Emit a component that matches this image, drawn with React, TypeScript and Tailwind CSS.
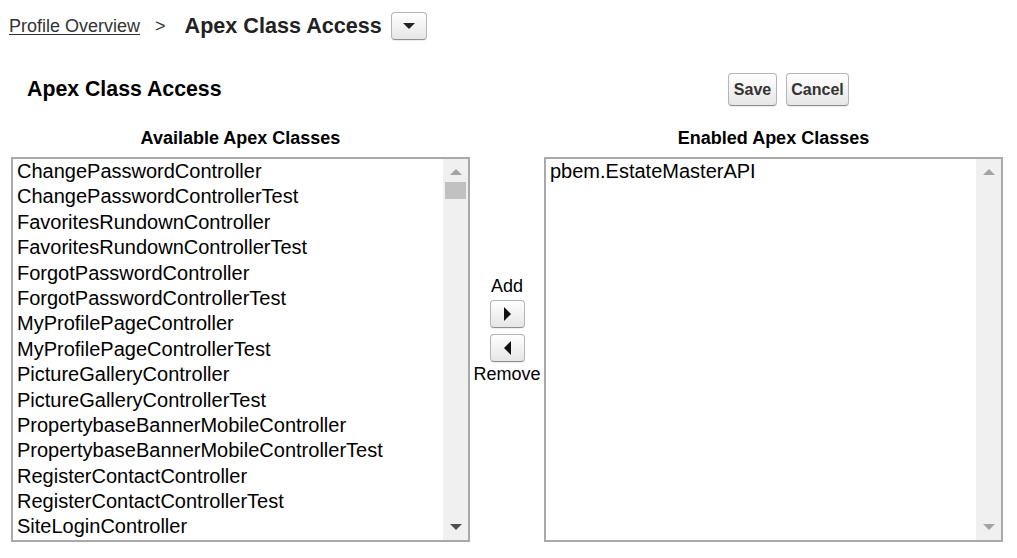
const available = [
  "ChangePasswordController",
  "ChangePasswordControllerTest",
  "FavoritesRundownController",
  "FavoritesRundownControllerTest",
  "ForgotPasswordController",
  "ForgotPasswordControllerTest",
  "MyProfilePageController",
  "MyProfilePageControllerTest",
  "PictureGalleryController",
  "PictureGalleryControllerTest",
  "PropertybaseBannerMobileController",
  "PropertybaseBannerMobileControllerTest",
  "RegisterContactController",
  "RegisterContactControllerTest",
  "SiteLoginController",
];

const enabled = ["pbem.EstateMasterAPI"];

function Tri({ dir, color }: { dir: "up" | "down" | "left" | "right"; color: string }) {
  const pts = {
    up: "0,6 6,0 12,6",
    down: "0,0 12,0 6,6",
    left: "7,0 7,14 0,7",
    right: "0,0 0,14 7,7",
  }[dir];
  const vertical = dir === "up" || dir === "down";
  return (
    <svg
      width={vertical ? 12 : 7}
      height={vertical ? 6 : 14}
      viewBox={vertical ? "0 0 12 6" : "0 0 7 14"}
    >
      <polygon points={pts} fill={color} />
    </svg>
  );
}

function ListBox({
  items,
  thumb,
}: {
  items: string[];
  thumb: boolean;
}) {
  return (
    <div className="flex h-[385px] w-[459px] border-2 border-[#a9a9a9] bg-white">
      <div className="flex-1 overflow-hidden pl-[4px]">
        {items.map((item) => (
          <div key={item} className="h-[25.4px] whitespace-nowrap text-[20px] leading-[25.4px] text-black">
            {item}
          </div>
        ))}
      </div>
      <div className="flex w-[25px] flex-col items-center bg-[#f0f0f0]">
        <div className="mt-[10px] flex h-[6px] items-center">
          <Tri dir="up" color="#a3a3a3" />
        </div>
        {thumb && <div className="mt-[7px] h-[17px] w-[21px] bg-[#c1c1c1]" />}
        <div className="mt-auto mb-[10px] flex h-[6px] items-center">
          <Tri dir="down" color={thumb ? "#505050" : "#a3a3a3"} />
        </div>
      </div>
    </div>
  );
}

function Btn({ children, className }: { children: React.ReactNode; className?: string }) {
  return (
    <button
      className={
        "flex items-center justify-center rounded-[4px] border border-[#b5b5b5] border-b-[#8f8f8f] bg-gradient-to-b from-white to-[#e6e6e6] shadow-[0_1px_1px_rgba(0,0,0,0.08)] " +
        (className ?? "")
      }
    >
      {children}
    </button>
  );
}

export default function App() {
  return (
    <div className="h-[558px] w-[1017px] overflow-hidden bg-white font-['Liberation_Sans',Arial,sans-serif] text-black">
      <div className="mt-[12px] flex h-[28px] items-center pl-[9px]">
        <a className="text-[18px] text-[#333] underline decoration-1 underline-offset-[2px]">Profile Overview</a>
        <span className="ml-[15px] text-[18px] text-[#333]">&gt;</span>
        <span className="ml-[19px] text-[21.6px] font-bold text-[#222]">Apex Class Access</span>
        <Btn className="ml-[9px] h-[28px] w-[36px]">
          <Tri dir="down" color="#222" />
        </Btn>
      </div>

      <div className="mt-[33px] flex h-[33px] items-center">
        <h2 className="w-[728px] pl-[27px] text-[21.3px] font-bold">Apex Class Access</h2>
        <Btn className="h-[33px] w-[49px] text-[16px] font-bold text-[#333]">Save</Btn>
        <Btn className="ml-[9px] h-[33px] w-[63px] text-[16px] font-bold text-[#333]">Cancel</Btn>
      </div>

      <div className="mt-[22px] flex pl-[11px]">
        <div className="flex flex-col">
          <div className="h-[21px] text-center text-[18px] font-bold leading-[21px]">Available Apex Classes</div>
          <div className="mt-[8px]">
            <ListBox items={available} thumb />
          </div>
        </div>

        <div className="flex w-[74px] flex-col items-center pt-[148px]">
          <div className="text-[18px] leading-[21px]">Add</div>
          <Btn className="mt-[3px] h-[28px] w-[35px]">
            <Tri dir="right" color="#111" />
          </Btn>
          <Btn className="mt-[6px] h-[28px] w-[35px]">
            <Tri dir="left" color="#111" />
          </Btn>
          <div className="mt-[2px] text-[18px] leading-[21px]">Remove</div>
        </div>

        <div className="flex flex-col">
          <div className="h-[21px] text-center text-[18px] font-bold leading-[21px]">Enabled Apex Classes</div>
          <div className="mt-[8px]">
            <ListBox items={enabled} thumb={false} />
          </div>
        </div>
      </div>
    </div>
  );
}
